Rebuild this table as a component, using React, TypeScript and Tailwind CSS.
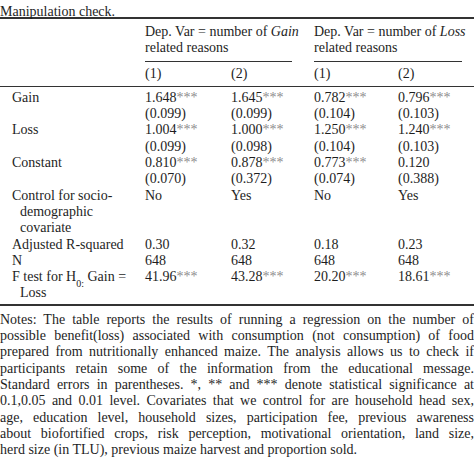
import React from "react";

const Stars = () => <span className="text-[#8d8d8d]">***</span>;

type Cell = { v: string; s?: boolean };

const rows: { label: string[]; cells: (Cell | null)[] }[] = [
  { label: ["Gain"], cells: [{ v: "1.648", s: true }, { v: "1.645", s: true }, { v: "0.782", s: true }, { v: "0.796", s: true }] },
  { label: [""], cells: [{ v: "(0.099)" }, { v: "(0.099)" }, { v: "(0.104)" }, { v: "(0.103)" }] },
  { label: ["Loss"], cells: [{ v: "1.004", s: true }, { v: "1.000", s: true }, { v: "1.250", s: true }, { v: "1.240", s: true }] },
  { label: [""], cells: [{ v: "(0.099)" }, { v: "(0.098)" }, { v: "(0.104)" }, { v: "(0.103)" }] },
  { label: ["Constant"], cells: [{ v: "0.810", s: true }, { v: "0.878", s: true }, { v: "0.773", s: true }, { v: "0.120" }] },
  { label: [""], cells: [{ v: "(0.070)" }, { v: "(0.372)" }, { v: "(0.074)" }, { v: "(0.388)" }] },
  { label: ["Control for socio-", "demographic", "covariate"], cells: [{ v: "No" }, { v: "Yes" }, { v: "No" }, { v: "Yes" }] },
  { label: ["Adjusted R-squared"], cells: [{ v: "0.30" }, { v: "0.32" }, { v: "0.18" }, { v: "0.23" }] },
  { label: ["N"], cells: [{ v: "648" }, { v: "648" }, { v: "648" }, { v: "648" }] },
];

const colW = ["w-[86px]", "w-[83px]", "w-[84px]", "w-[76px]"];

const notes = [
  "Notes: The table reports the results of running a regression on the number of",
  "possible benefit(loss) associated with consumption (not consumption) of food",
  "prepared from nutritionally enhanced maize. The analysis allows us to check if",
  "participants retain some of the information from the educational message.",
  "Standard errors in parentheses. *, ** and *** denote statistical significance at",
  "0.1,0.05 and 0.01 level. Covariates that we control for are household head sex,",
  "age, education level, household sizes, participation fee, previous awareness",
  "about biofortified crops, risk perception, motivational orientation, land size,",
  "herd size (in TLU), previous maize harvest and proportion sold.",
];

export default function App() {
  return (
    <div className="w-[474px] h-[468px] overflow-hidden bg-white text-[#1e1e1e] [font-family:'Liberation_Serif',serif] text-[14px] leading-[16.3px]">
      <p className="pt-[4px] h-[17px]">Manipulation check.</p>

      {/* header */}
      <div className="border-t-2 border-[#333] pt-[5px] flex">
        <div className="w-[145px] shrink-0" />
        <div className="w-[169px] shrink-0 pr-[22px]">
          <div className="pb-[4px] border-b border-[#333] whitespace-nowrap">
            Dep. Var = number of <i>Gain</i>
            <br />
            related reasons
          </div>
        </div>
        <div className="w-[160px] shrink-0 pr-[12px]">
          <div className="pb-[4px] border-b border-[#333] whitespace-nowrap">
            Dep. Var = number of <i>Loss</i>
            <br />
            related reasons
          </div>
        </div>
      </div>
      <div className="flex pt-[4px] pb-[4px] border-b border-[#333]">
        <div className="w-[145px] shrink-0" />
        {["(1)", "(2)", "(1)", "(2)"].map((t, i) => (
          <div key={i} className={colW[i]}>{t}</div>
        ))}
      </div>

      {/* body */}
      <div className="pt-[3px] pb-[2px] border-b-2 border-[#333]">
        {rows.map((r, i) => (
          <div key={i} className="flex">
            <div className="w-[145px] shrink-0 pl-[12px] whitespace-nowrap">
              {r.label.map((l, j) => (
                <div key={j} className={j > 0 ? "pl-[8px]" : ""}>{l || "\u00a0"}</div>
              ))}
            </div>
            {r.cells.map((c, j) => (
              <div key={j} className={colW[j] + " whitespace-nowrap"}>
                {c?.v}
                {c?.s && <Stars />}
              </div>
            ))}
          </div>
        ))}
        <div className="flex">
          <div className="w-[145px] shrink-0 pl-[12px] whitespace-nowrap">
            <div>
              F test for H<sub className="text-[10px] align-[-3px]">0:</sub> Gain =
            </div>
            <div className="pl-[8px]">Loss</div>
          </div>
          {["41.96", "43.28", "20.20", "18.61"].map((v, j) => (
            <div key={j} className={colW[j] + " whitespace-nowrap"}>
              {v}
              <Stars />
            </div>
          ))}
        </div>
      </div>

      {/* notes */}
      <div className="pt-[6px]">
        {notes.map((l, i) => (
          <div
            key={i}
            className={i < notes.length - 1 ? "text-justify [text-align-last:justify]" : ""}
          >
            {l}
          </div>
        ))}
      </div>
    </div>
  );
}
